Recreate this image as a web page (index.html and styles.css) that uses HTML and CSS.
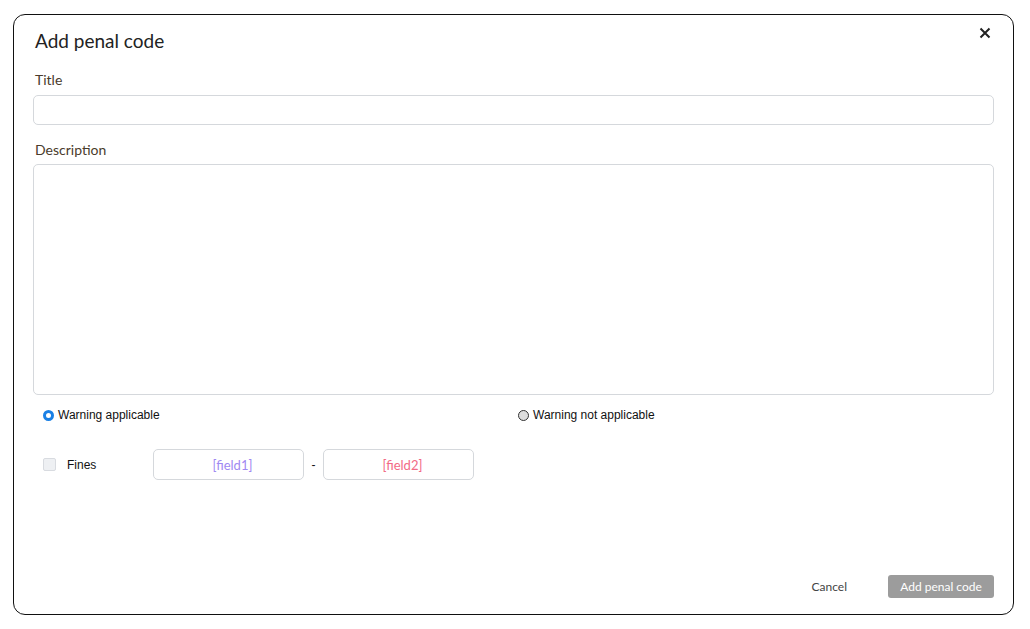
FILE: index.html
```html
<!doctype html>
<html lang="en">
<head>
  <meta charset="UTF-8"/>
  <meta content="width=device-width, initial-scale=1" name="viewport">
  <title>Add penal code</title>
  <link rel="stylesheet" href="styles.css">
</head>
<body>
<div class="dialog">
  <div class="dialog-header">
    <h2 class="dialog-title">Add penal code</h2>
    <button class="close" type="button" aria-label="Close">
      <svg width="12" height="12" viewBox="0 0 12 12">
        <path d="M1.5 1.5 L10.5 10.5 M10.5 1.5 L1.5 10.5" stroke="#222" stroke-width="2" fill="none"/>
      </svg>
    </button>
  </div>

  <div class="field">
    <label class="field-label">Title</label>
    <div class="input title-input"></div>
  </div>

  <div class="field field-desc">
    <label class="field-label">Description</label>
    <div class="input textarea"></div>
  </div>

  <div class="radios">
    <label class="radio-opt">
      <span class="radio checked"></span>
      Warning applicable
    </label>
    <label class="radio-opt second">
      <span class="radio"></span>
      Warning not applicable
    </label>
  </div>

  <div class="fines">
    <span class="checkbox"></span>
    <span class="fines-label">Fines</span>
    <div class="input small"><span class="ph ph-1">[field1]</span></div>
    <span class="dash">-</span>
    <div class="input small"><span class="ph ph-2">[field2]</span></div>
  </div>

  <div class="dialog-footer">
    <button class="btn btn-link" type="button">Cancel</button>
    <button class="btn btn-primary" type="button">Add penal code</button>
  </div>
</div>
</body>
</html>
```

FILE: styles.css
```css
*, *:before {
  box-sizing: border-box;
}

body {
  margin: 0;
  background: #fff;
  font-family: Lato, "Open Sans", sans-serif;
  color: #333;
}

.dialog {
  display: flex;
  flex-direction: column;
  width: 1001px;
  height: 601px;
  margin: 14px 0 0 13px;
  padding: 14px 19px 16px;
  border: 1px solid #111;
  border-radius: 12px;
  background: #fff;
}

.dialog-header {
  display: flex;
  justify-content: space-between;
  align-items: flex-start;
  height: 24px;
}

.dialog-title {
  margin: 0 0 0 2px;
  font-size: 19px;
  line-height: 24px;
  font-weight: 400;
  color: #222;
}

.close {
  margin: -2px 3px 0 0;
  padding: 0;
  width: 12px;
  height: 12px;
  border: 0;
  background: none;
  line-height: 0;
}

.field {
  margin-top: 18px;
}

.field-desc {
  margin-top: 16px;
}

.field-label {
  display: block;
  margin-left: 2px;
  font-size: 14px;
  line-height: 18px;
  color: #4a3b2c;
}

.input {
  border: 1px solid #d5d8dc;
  border-radius: 5px;
  background: #fff;
}

.title-input {
  margin-top: 6px;
  height: 30px;
}

.textarea {
  margin-top: 5px;
  height: 231px;
}

.radios {
  display: grid;
  grid-template-columns: 475px 1fr;
  margin-top: 12px;
  padding-left: 10px;
  font-family: "Liberation Sans", Arial, sans-serif;
  font-size: 12px;
  line-height: 16px;
  color: #111;
}

.radio-opt {
  display: flex;
  align-items: center;
  gap: 4px;
}

.radio {
  width: 11px;
  height: 11px;
  border-radius: 50%;
  border: 1px solid #333;
  background: #ddd;
}

.radio.checked {
  border: 3px solid #1a80e5;
  background: #fff;
}

.fines {
  display: flex;
  align-items: center;
  margin-top: 26px;
  padding-left: 10px;
  font-family: "Liberation Sans", Arial, sans-serif;
  font-size: 12px;
  color: #111;
}

.checkbox {
  width: 13px;
  height: 13px;
  border: 1px solid #d8dbe0;
  border-radius: 2px;
  background: #eef0f3;
}

.fines-label {
  margin-left: 11px;
  width: 86px;
}

.input.small {
  display: flex;
  justify-content: center;
  align-items: center;
  width: 151px;
  height: 31px;
  padding-left: 8px;
  font-family: Lato, "Open Sans", sans-serif;
  font-size: 13px;
}

.dash {
  width: 19px;
  text-align: center;
}

.ph-1 {
  color: #a088f2;
}

.ph-2 {
  color: #f26a85;
}

.dialog-footer {
  display: flex;
  justify-content: flex-end;
  align-items: center;
  gap: 31px;
  margin-top: auto;
}

.btn {
  font-family: Lato, "Open Sans", sans-serif;
  font-size: 12px;
  border: 0;
  cursor: pointer;
}

.btn-link {
  background: none;
  color: #444;
  padding: 0 10px;
}

.btn-primary {
  width: 106px;
  height: 23px;
  border-radius: 3px;
  background: #9c9c9c;
  color: #fff;
}
```
